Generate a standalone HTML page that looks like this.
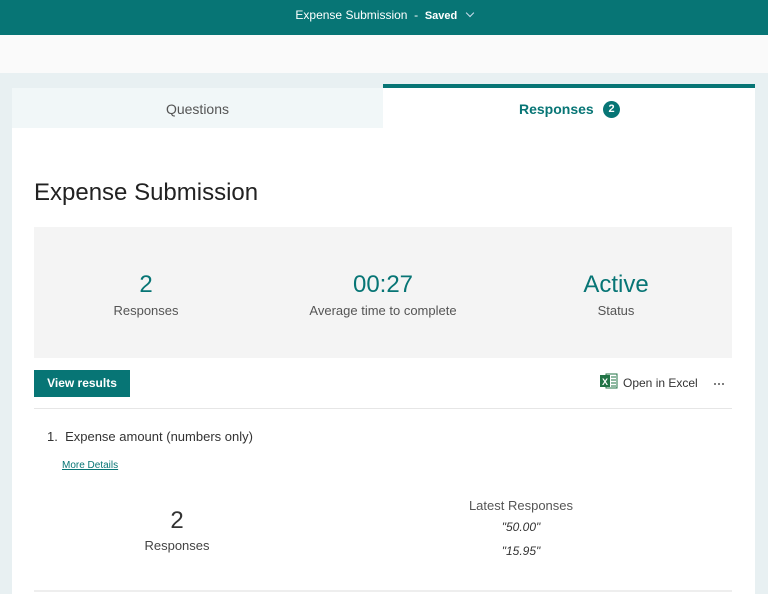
<!DOCTYPE html>
<html><head><meta charset="utf-8"><style>
*{margin:0;padding:0;box-sizing:border-box}
body{width:768px;height:594px;overflow:hidden;background:#e8f0f2;font-family:"Liberation Sans",sans-serif;position:relative;color:#333}
.abs{position:absolute}
.c{text-align:center}
.dot{position:absolute;width:2px;height:2px;background:#555;border-radius:1px;top:383px}
</style></head><body>
<div class="abs" style="left:0;top:0;width:768px;height:35px;background:#077575"></div>
<div class="abs c" style="left:0;top:8px;width:768px;color:#fff;font-size:12px">Expense Submission &nbsp;- &nbsp;<b style="font-size:11px">Saved</b> <span style="display:inline-block;width:6px;height:6px;border-right:1px solid #cde;border-bottom:1px solid #cde;transform:rotate(45deg);margin:0 0 3px 6px"></span></div>
<div class="abs" style="left:0;top:35px;width:768px;height:38px;background:#fafafa"></div>
<div class="abs" style="left:12px;top:88px;width:371px;height:40px;background:#f1f7f8"></div>
<div class="abs c" style="left:12px;top:101px;width:371px;font-size:14px;color:#555">Questions</div>
<div class="abs" style="left:383px;top:84px;width:372px;height:510px;background:#fff;border-top:4px solid #077575"></div>
<div class="abs" style="left:12px;top:128px;width:743px;height:466px;background:#fff"></div>
<div class="abs" style="left:519px;top:101px;font-size:14px;color:#077575;font-weight:bold">Responses</div>
<div class="abs c" style="left:603px;top:101px;width:17px;height:17px;border-radius:50%;background:#077575;color:#fff;font-size:11px;font-weight:bold;line-height:17px">2</div>
<div class="abs" style="left:34px;top:179px;font-size:24px;color:#222">Expense Submission</div>
<div class="abs" style="left:34px;top:227px;width:698px;height:131px;background:#f4f4f4"></div>
<div class="abs c" style="left:46px;top:271px;width:200px;font-size:24px;color:#077575">2</div>
<div class="abs c" style="left:46px;top:303px;width:200px;font-size:13px;color:#555">Responses</div>
<div class="abs c" style="left:283px;top:271px;width:200px;font-size:24px;color:#077575">00:27</div>
<div class="abs c" style="left:268px;top:303px;width:230px;font-size:13px;color:#555">Average time to complete</div>
<div class="abs c" style="left:516px;top:271px;width:200px;font-size:24px;color:#077575">Active</div>
<div class="abs c" style="left:516px;top:303px;width:200px;font-size:13px;color:#555">Status</div>
<div class="abs c" style="left:34px;top:370px;width:96px;height:27px;background:#077575;color:#fff;font-size:12px;font-weight:bold;line-height:27px">View results</div>
<svg class="abs" style="left:600px;top:373px" width="18" height="16"><rect x="6" y="1" width="11" height="14" fill="#fff" stroke="#217346"/><rect x="0" y="2" width="10" height="12" fill="#217346"/><text x="2" y="12" fill="#fff" font-size="9" font-weight="bold" font-family="Liberation Sans">X</text><path d="M11 4h5M11 7h5M11 10h5M11 13h5" stroke="#217346"/></svg>
<div class="abs" style="left:623px;top:376px;font-size:12px;color:#333">Open in Excel</div>
<div class="dot" style="left:714px"></div><div class="dot" style="left:718px"></div><div class="dot" style="left:722px"></div>
<div class="abs" style="left:34px;top:408px;width:698px;height:1px;background:#e6e6e6"></div>
<div class="abs" style="left:47px;top:429px;font-size:13px;color:#333">1.&nbsp; Expense amount (numbers only)</div>
<div class="abs" style="left:62px;top:460px;font-size:10px;color:#077575;text-decoration:underline">More Details</div>
<div class="abs c" style="left:127px;top:507px;width:100px;font-size:24px;color:#333">2</div>
<div class="abs c" style="left:127px;top:538px;width:100px;font-size:13px;color:#444">Responses</div>
<div class="abs c" style="left:441px;top:498px;width:160px;font-size:13px;color:#555">Latest Responses</div>
<div class="abs c" style="left:441px;top:520px;width:160px;font-size:12px;font-style:italic;color:#333">"50.00"</div>
<div class="abs c" style="left:441px;top:544px;width:160px;font-size:12px;font-style:italic;color:#333">"15.95"</div>
<div class="abs" style="left:34px;top:590px;width:698px;height:2px;background:#eee"></div>
</body></html>
